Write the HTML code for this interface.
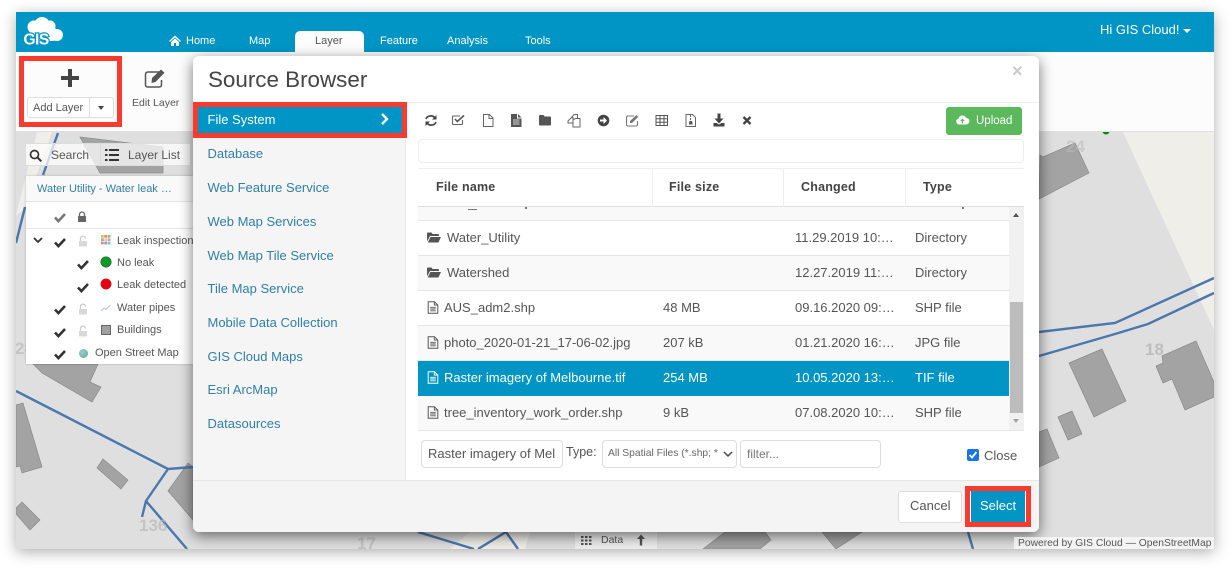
<!DOCTYPE html>
<html><head><meta charset="utf-8"><style>
html,body{margin:0;padding:0;background:#fff}
body{width:1230px;height:570px;overflow:hidden;position:relative;font-family:"Liberation Sans",sans-serif;color:#555}
#root{position:absolute;left:0;top:0;width:1230px;height:570px;filter:blur(.35px)}
.a{position:absolute}
.t{position:absolute;white-space:nowrap;line-height:16px;font-size:13px}
svg.i{position:absolute;overflow:visible}
#frame{position:absolute;left:16px;top:12px;width:1198px;height:537px;background:#e0dfe0;box-shadow:0 3px 14px rgba(0,0,0,.32);overflow:hidden}
.nav{color:#fff;font-size:11px;top:33px}
.side{color:#2f7fa6;left:207.500px;font-size:13px}
.th{font-weight:bold;color:#444;top:179px;font-size:12.500px;letter-spacing:.2px}
.row{position:absolute;left:418px;width:591px;height:34px;border-bottom:1px solid #e6e6e6}
.l{color:#555;font-size:11px}
.inp{position:absolute;background:#fff;border:1px solid #ddd;border-radius:4px;box-sizing:border-box}
.red{position:absolute;border:5px solid #f83b2e;box-sizing:border-box}
</style></head><body><div id="root">
<svg width="0" height="0" style="position:absolute"><defs>
<symbol id="chk" viewBox="0 0 12 12"><path d="M1 6.500l3.400 3.600L11 3" fill="none" stroke="currentColor" stroke-width="2.600"/></symbol>
<symbol id="unl" viewBox="0 0 12 12"><path d="M3.500 6V3.600a2.500 2.500 0 0 1 5 0" fill="none" stroke="#ccc" stroke-width="1.300"/><rect x="2" y="6" width="8" height="5.500" rx=".7" fill="#d8d8d8"/></symbol>
<symbol id="fol" viewBox="0 0 14 11"><path d="M0 1.500Q0 .5 1 .5h3.500l1 1.500H11q1 0 1 1v1H3L0 9.500zM3.400 5H14l-2.600 5.500H.8z" fill="#555"/></symbol>
<symbol id="doc" viewBox="0 0 11 13"><path d="M.7.7h6.200l3.400 3.400v8.200H.7z" fill="none" stroke="currentColor" stroke-width="1"/><path d="M6.800.7v3.400h3.400M2.700 6.300h5.600M2.700 8h5.600M2.700 9.800h5.600" fill="none" stroke="currentColor" stroke-width=".9"/></symbol>
</defs></svg>

<div id="frame"></div>
<svg class="i" style="left:16px;top:132px;clip-path:inset(0)" width="1198" height="417" viewBox="16 132 1198 417">
<rect x="16" y="132" width="1198" height="417" fill="#e0dfe0"/>
<polygon points="1123,132 1214,132 1214,330" fill="#f0eee8"/>
<polygon points="37,132 52,132 24,210 16,215" fill="#f0eee8"/>
<polygon points="450,549 470,532 530,532 525,549" fill="#f0eee8"/>
<g fill="#a3a3a3" stroke="#8b8b8b" stroke-width=".7">
<polygon points="1040,155 1043,157 1075,143 1089,173 1039,199"/>
<polygon points="1069,363 1102,349 1126,401 1094,417"/>
<polygon points="1058,417 1072,411 1082,434 1068,440"/>
<polygon points="1039,432 1047,429 1059,458 1039,467"/>
<polygon points="1162,356 1196,341 1214,382 1214,397 1185,410 1172,379 1163,383 1156,366 1163,363"/>
<polygon points="80,137 163,147 163,173 100,173"/>
<polygon points="33,364 98,364 90,382 101,387 92,402 42,373"/>
<polygon points="16,405 23,403 42,467 22,473 20,466 16,467"/>
<polygon points="103,459 128,480 121,489 97,468"/>
<polygon points="22,502 40,520 30,530 16,514 16,508"/>
<polygon points="168,491 188,463 193,467 193,520"/>
<polygon points="703,549 725,532 765,532 771,540 760,549"/>
<polygon points="822,532 862,532 836,549"/>
</g>
<g fill="none" stroke="#4a78ad" stroke-width="2.400">
<path d="M1039 332L1115 323L1214 278"/>
<path d="M1039 356L1115 334L1148 324L1214 293"/>
<path d="M16 391L168 469L193 467M168 469L146 501L187 549M146 501L142 517"/>
<path d="M58 133L43 175M25 207L16 243"/>
<path d="M968 532L973 549M418 532L474 549M478 549L506 532L518 549"/>
</g>
<circle cx="1106" cy="131" r="3.500" fill="#0a8a1d"/>
<g fill="#b9b9b9" font-family="'Liberation Sans',sans-serif" font-size="17" font-weight="bold">
<text x="1145" y="355" opacity=".85">18</text><text x="1066" y="152" opacity=".55">24</text><text x="139" y="531" opacity=".7">136</text><text x="15" y="354" opacity=".7">28</text><text x="357" y="549" opacity=".7">17</text>
</g>
</svg>

<!-- data tab (under dialog shadow) -->
<div class="a" style="left:575px;top:532px;width:82px;height:17px;background:#eee"></div>
<svg class="i" style="left:581px;top:535px" width="11" height="11" viewBox="0 0 11 11"><path d="M0 1h2.500v2H0zM4 1h2.500v2H4zM8 1h2.500v2H8zM0 4.500h2.500v2H0zM4 4.500h2.500v2H4zM8 4.500h2.500v2H8zM0 8h2.500v2H0zM4 8h2.500v2H4zM8 8h2.500v2H8z" fill="#555"/></svg>
<div class="t" style="left:601px;top:532px;font-size:10.500px">Data</div>
<svg class="i" style="left:636px;top:534px" width="10" height="12" viewBox="0 0 10 12"><path d="M5 .5L9 5H6.200v6.500H3.800V5H1z" fill="#555"/></svg>

<!-- header -->
<div class="a" style="left:16px;top:12px;width:1198px;height:40px;background:#0095c4"></div>
<svg class="i" style="left:23px;top:16px" width="42" height="32" viewBox="0 0 42 32">
<g fill="#fff"><circle cx="11" cy="11" r="6.500"/><circle cx="19" cy="9" r="8"/><circle cx="27" cy="10" r="5.500"/><circle cx="34" cy="19" r="6"/><rect x="7" y="11" width="26" height="14" rx="3"/></g>
<text x="0.500" y="28.500" font-family="'Liberation Sans',sans-serif" font-weight="bold" font-size="15.500" fill="#fff" stroke="#0095c4" stroke-width="2.400" paint-order="stroke" letter-spacing="-.5">GIS</text>
</svg>
<svg class="i" style="left:169px;top:35px" width="12" height="11" viewBox="0 0 12 11"><path d="M6 .5L0 6l.9.9L6 2.400l5.100 4.500.9-.9zM2 7v4h3V8h2v3h3V7L6 3.400z" fill="#fff"/></svg>
<div class="t nav" style="left:186px">Home</div>
<div class="t nav" style="left:249px">Map</div>
<div class="a" style="left:295px;top:31px;width:69px;height:21px;background:#fdfdfd;border-radius:5px 5px 0 0"></div>
<div class="t nav" style="left:315px;color:#555">Layer</div>
<div class="t nav" style="left:380px">Feature</div>
<div class="t nav" style="left:447px">Analysis</div>
<div class="t nav" style="left:525px">Tools</div>
<div class="t" style="left:1100px;top:22px;color:#fff;font-size:13px">Hi GIS Cloud!</div>
<div class="a" style="left:1183px;top:29px;border:4px solid transparent;border-top-color:#fff;border-bottom:0"></div>

<!-- toolbar -->
<div class="a" style="left:16px;top:52px;width:1198px;height:80px;background:#fcfcfc;border-bottom:1px solid #e0e0e0;box-sizing:border-box"></div>
<svg class="i" style="left:61px;top:69px" width="18" height="18" viewBox="0 0 18 18"><path d="M7 0h4v7h7v4h-7v7H7v-7H0V7h7z" fill="#444"/></svg>
<div class="a" style="left:27px;top:97px;width:87px;height:21px;border:1px solid #ddd;border-radius:3px;box-sizing:border-box;background:#fff"></div>
<div class="a" style="left:89px;top:97px;width:1px;height:21px;background:#ddd"></div>
<div class="t" style="left:33px;top:100px;font-size:11px">Add Layer</div>
<div class="a" style="left:98px;top:106px;border:3.500px solid transparent;border-top:4px solid #444;border-bottom:0"></div>
<svg class="i" style="left:144px;top:68px" width="24" height="21" viewBox="0 0 24 21"><path d="M15 4H4Q1.500 4 1.500 6.500v10Q1.500 19 4 19h11q2.500 0 2.500-2.500V12" fill="none" stroke="#555" stroke-width="1.500"/><path d="M8 10L17 1.500l3.500 3.300L11.500 14l-4 1z" fill="#555"/></svg>
<div class="t" style="left:132px;top:95px;font-size:10.500px">Edit Layer</div>

<!-- search -->
<div class="a" style="left:25px;top:143px;width:166px;height:23px;background:rgba(255,255,255,.72);border:1px solid #ddd;box-sizing:border-box"></div>
<div class="a" style="left:100px;top:143px;width:1px;height:23px;background:#ddd"></div>
<svg class="i" style="left:29px;top:149px" width="13" height="13" viewBox="0 0 13 13"><circle cx="5.500" cy="5.500" r="4" fill="none" stroke="#333" stroke-width="1.700"/><path d="M8.500 8.500L12.300 12.300" stroke="#333" stroke-width="2"/></svg>
<div class="t" style="left:51px;top:147px;font-size:12px">Search</div>
<svg class="i" style="left:105px;top:149px" width="14" height="12" viewBox="0 0 14 12"><path d="M0 1h2.500M4 1h10M0 6h2.500M4 6h10M0 11h2.500M4 11h10" stroke="#333" stroke-width="2"/></svg>
<div class="t" style="left:128px;top:147px;font-size:12px">Layer List</div>

<!-- layer panel -->
<div class="a" style="left:26px;top:176px;width:167px;height:188px;background:#fff;box-shadow:0 0 2px rgba(0,0,0,.25)"></div>
<div class="a" style="left:26px;top:176px;width:167px;height:26px;background:#f9f9f9;border-bottom:1px solid #e5e5e5;box-sizing:border-box"></div>
<div class="t" style="left:37px;top:181px;font-size:11px;color:#357fa5">Water Utility - Water leak …</div>
<div class="a" style="left:26px;top:228px;width:167px;height:1px;background:#e5e5e5"></div>
<svg class="i" style="left:54px;top:211px;color:#777" width="12" height="12"><use href="#chk"/></svg>
<svg class="i" style="left:77px;top:211px" width="10" height="12" viewBox="0 0 10 12"><path d="M2.500 5V3.500a2.500 2.500 0 0 1 5 0V5" fill="none" stroke="#666" stroke-width="1.300"/><rect x="1" y="5" width="8" height="6" rx=".6" fill="#666"/></svg>
<svg class="i" style="left:33px;top:237px" width="10" height="7" viewBox="0 0 10 7"><path d="M1 1l4 4 4-4" fill="none" stroke="#333" stroke-width="1.800"/></svg>
<svg class="i" style="left:54px;top:236px;color:#333" width="12" height="12"><use href="#chk"/></svg>
<svg class="i" style="left:77px;top:258px;color:#333" width="12" height="12"><use href="#chk"/></svg>
<svg class="i" style="left:77px;top:281px;color:#333" width="12" height="12"><use href="#chk"/></svg>
<svg class="i" style="left:54px;top:303px;color:#333" width="12" height="12"><use href="#chk"/></svg>
<svg class="i" style="left:54px;top:326px;color:#333" width="12" height="12"><use href="#chk"/></svg>
<svg class="i" style="left:54px;top:348px;color:#333" width="12" height="12"><use href="#chk"/></svg>
<svg class="i" style="left:77px;top:235px" width="12" height="12"><use href="#unl"/></svg>
<svg class="i" style="left:77px;top:303px" width="12" height="12"><use href="#unl"/></svg>
<svg class="i" style="left:77px;top:325px" width="12" height="12"><use href="#unl"/></svg>
<svg class="i" style="left:101px;top:235px" width="10" height="10" viewBox="0 0 9 9"><g><rect width="2.500" height="2.500" fill="#f2b84b"/><rect x="3" width="2.500" height="2.500" fill="#ef7f7f"/><rect x="6" width="2.500" height="2.500" fill="#7fc97f"/><rect y="3" width="2.500" height="2.500" fill="#7fb2e5"/><rect x="3" y="3" width="2.500" height="2.500" fill="#f2d04b"/><rect x="6" y="3" width="2.500" height="2.500" fill="#e58fc8"/><rect y="6" width="2.500" height="2.500" fill="#e58f6f"/><rect x="3" y="6" width="2.500" height="2.500" fill="#9f8fe5"/><rect x="6" y="6" width="2.500" height="2.500" fill="#6fd0c8"/></g></svg>
<div class="a" style="left:101px;top:257px;width:10px;height:10px;border-radius:50%;background:#0a9b24;box-shadow:0 0 0 .5px #444"></div>
<div class="a" style="left:101px;top:279px;width:10px;height:10px;border-radius:50%;background:#e8000f;box-shadow:0 0 0 .5px #a33"></div>
<svg class="i" style="left:101px;top:304px" width="10" height="8" viewBox="0 0 10 8"><path d="M0 7l3-3 2 1.500L9.500 1" fill="none" stroke="#a9c4e4" stroke-width="1"/></svg>
<div class="a" style="left:101px;top:325px;width:10px;height:10px;background:#a0a0a0;border:1px solid #666;box-sizing:border-box"></div>
<div class="a" style="left:79px;top:349px;width:9px;height:9px;border-radius:50%;background:radial-gradient(circle at 35% 35%,#8fd0e0,#6aa86a)"></div>
<div class="a" style="left:26px;top:230px;width:167px;height:134px;overflow:hidden">
<div class="t l" style="left:91px;top:3px">Leak inspection</div>
<div class="t l" style="left:91px;top:25px">No leak</div>
<div class="t l" style="left:91px;top:47px">Leak detected</div>
<div class="t l" style="left:91px;top:70px">Water pipes</div>
<div class="t l" style="left:91px;top:92px">Buildings</div>
<div class="t l" style="left:69px;top:115px">Open Street Map</div>
</div>

<!-- dialog -->
<div class="a" style="left:193px;top:56px;width:846px;height:476px;background:#fff;border-radius:6px;box-shadow:0 4px 14px rgba(0,0,0,.55);overflow:hidden">
<div class="a" style="left:0;top:46px;width:846px;height:1px;background:#eee"></div>
<div class="a" style="left:0;top:47px;width:212px;height:377px;background:#f5f5f5;border-right:1px solid #e8e8e8"></div>
<div class="a" style="left:0;top:424px;width:846px;height:52px;background:#f4f4f4;border-top:1px solid #e6e6e6;box-sizing:border-box"></div>
</div>
<div class="t" style="left:208px;top:66px;font-size:22.400px;line-height:28px;color:#444">Source Browser</div>
<div class="t" style="left:1012px;top:63px;font-size:18px;font-weight:bold;color:#c9c9c9">×</div>

<div class="a" style="left:198px;top:107px;width:204px;height:26px;background:#0095c4"></div>
<div class="t" style="left:207.500px;top:112px;color:#fff">File System</div>
<svg class="i" style="left:380px;top:113px" width="9" height="12" viewBox="0 0 9 12"><path d="M2 1l5 5-5 5" fill="none" stroke="#fff" stroke-width="2.400"/></svg>
<div class="t side" style="top:146px">Database</div>
<div class="t side" style="top:180px">Web Feature Service</div>
<div class="t side" style="top:214px">Web Map Services</div>
<div class="t side" style="top:248px">Web Map Tile Service</div>
<div class="t side" style="top:281px">Tile Map Service</div>
<div class="t side" style="top:315px">Mobile Data Collection</div>
<div class="t side" style="top:349px">GIS Cloud Maps</div>
<div class="t side" style="top:382px">Esri ArcMap</div>
<div class="t side" style="top:416px">Datasources</div>

<!-- file toolbar icons -->
<svg class="i" style="left:424px;top:113px" width="340" height="15" viewBox="424 113 340 15">
<g fill="none" stroke="#444" stroke-width="1.700"><path d="M426 119a5 4.500 0 0 1 9-1M436 122a5 4.500 0 0 1-9 1"/></g><path d="M436.500 115v4.500H432zM425.500 126v-4.500H430z" fill="#444"/>
<path d="M460 116h-6.500q-1 0-1 1v6.500q0 1 1 1h8q1 0 1-1V120" fill="none" stroke="#666" stroke-width="1.100"/><path d="M455 119l2.300 2.500L464 115.500" fill="none" stroke="#555" stroke-width="1.600"/>
<path d="M483.500 114.500h6l3.500 3.500v8.500h-9.500zM489 114.500v4h4" fill="none" stroke="#666" stroke-width="1"/>
<path d="M511 114h6v4.500h4.500V127H511zM518 114l3.500 3.500H518z" fill="#555"/><path d="M513 120h6.500M513 122h6.500M513 124h6.500" stroke="#fff" stroke-width=".8"/>
<path d="M539 116q0-1 1-1h3.500l1.200 1.500h5.300q1 0 1 1v7q0 1-1 1h-10q-1 0-1-1z" fill="#555"/>
<path d="M571.500 117.500l2.500-3h3.500v4M568 121l3.500-3.500h1.500v5.500h-5zM573 119.500l3-1h4v8.500h-7z" fill="none" stroke="#666" stroke-width="1"/>
<circle cx="603.500" cy="120.500" r="5.800" fill="#444"/><path d="M600 119.500h3.500V117l3.500 3.500-3.500 3.500v-2.500H600z" fill="#fff"/>
<path d="M634 116h-6q-1.500 0-1.500 1.500v7q0 1.500 1.500 1.500h8q1.500 0 1.500-1.500V121" fill="none" stroke="#777" stroke-width="1.100"/><path d="M630 121l6.500-6 1.800 1.800-6.300 6.200h-2z" fill="#777"/>
<path d="M656 115.500h11.500v10H656zM656 118.800h11.500M656 122.200h11.500M660 115.500v10M664 115.500v10" fill="none" stroke="#555" stroke-width="1"/>
<path d="M686 114.500h6.500l3 3v9h-9.500zM690.500 115v2M690.500 118v2" fill="none" stroke="#666" stroke-width="1"/><path d="M689.500 121h2.500l.7 3.500h-3.900z" fill="#555"/>
<path d="M717.500 113.500h3v5h3l-4.500 5-4.500-5h3zM713.500 123h3l2.500 1.500 2.500-1.500h3v3.500h-11z" fill="#444"/>
<path d="M743.500 117l7 7M750.500 117l-7 7" stroke="#444" stroke-width="2.400"/>
</svg>

<div class="a" style="left:946px;top:107px;width:76px;height:28px;background:#5cb85c;border-radius:3px"></div>
<svg class="i" style="left:956px;top:115px" width="13" height="10" viewBox="0 0 13 10"><path d="M3 9.500a3 3 0 0 1-.5-5.900 4 4 0 0 1 7.500-.9 3.400 3.400 0 0 1 0 6.800z" fill="#fff"/><path d="M6.500 3.500L4.300 6h1.500v2.500h1.400V6h1.500z" fill="#5cb85c"/></svg>
<div class="t" style="left:976px;top:113px;font-size:11.500px;color:#fff">Upload</div>
<div class="inp" style="left:418px;top:139px;width:606px;height:24px;border-color:#eee"></div>

<!-- table -->
<div class="a" style="left:418px;top:168px;width:606px;height:39px;border-top:1px solid #eee;border-bottom:1px solid #ddd;box-sizing:border-box;background:#fff"></div>
<div class="a" style="left:652px;top:168px;width:1px;height:39px;background:#eee"></div>
<div class="a" style="left:783px;top:168px;width:1px;height:39px;background:#eee"></div>
<div class="a" style="left:905px;top:168px;width:1px;height:39px;background:#eee"></div>
<div class="t th" style="left:436px">File name</div>
<div class="t th" style="left:669px">File size</div>
<div class="t th" style="left:801px">Changed</div>
<div class="t th" style="left:923px">Type</div>

<div class="row" style="top:207px;height:13px;background:#f9f9f9"></div>
<div class="row" style="top:221px;background:#fff"></div>
<div class="row" style="top:256px;background:#f9f9f9"></div>
<div class="row" style="top:291px;background:#fff"></div>
<div class="row" style="top:326px;background:#f9f9f9"></div>
<div class="row" style="top:361px;background:#0095c4;border:0;height:35px"></div>
<div class="row" style="top:396px;background:#f9f9f9"></div>
<div class="a" style="left:468px;top:209px;width:9px;height:1px;background:#777"></div>
<div class="a" style="left:525px;top:207px;width:2px;height:2px;background:#777"></div>
<div class="a" style="left:962px;top:207px;width:2px;height:2px;background:#777"></div>

<svg class="i" style="left:427px;top:232px" width="14" height="11"><use href="#fol"/></svg>
<svg class="i" style="left:427px;top:267px" width="14" height="11"><use href="#fol"/></svg>
<svg class="i" style="left:427px;top:301px;color:#555" width="12" height="13"><use href="#doc"/></svg>
<svg class="i" style="left:427px;top:336px;color:#555" width="12" height="13"><use href="#doc"/></svg>
<svg class="i" style="left:427px;top:371px;color:#fff" width="12" height="13"><use href="#doc"/></svg>
<svg class="i" style="left:427px;top:406px;color:#555" width="12" height="13"><use href="#doc"/></svg>

<div class="t" style="left:447px;top:230px">Water_Utility</div>
<div class="t" style="left:447px;top:265px">Watershed</div>
<div class="t" style="left:444px;top:300px">AUS_adm2.shp</div>
<div class="t" style="left:444px;top:335px">photo_2020-01-21_17-06-02.jpg</div>
<div class="t" style="left:444px;top:370px;color:#fff">Raster imagery of Melbourne.tif</div>
<div class="t" style="left:444px;top:405px">tree_inventory_work_order.shp</div>
<div class="t" style="left:663px;top:300px">48 MB</div>
<div class="t" style="left:663px;top:335px">207 kB</div>
<div class="t" style="left:663px;top:370px;color:#fff">254 MB</div>
<div class="t" style="left:663px;top:405px">9 kB</div>
<div class="t" style="left:795px;top:230px">11.29.2019 10:…</div>
<div class="t" style="left:795px;top:265px">12.27.2019 11:…</div>
<div class="t" style="left:795px;top:300px">09.16.2020 09:…</div>
<div class="t" style="left:795px;top:335px">01.21.2020 16:…</div>
<div class="t" style="left:795px;top:370px;color:#fff">10.05.2020 13:…</div>
<div class="t" style="left:795px;top:405px">07.08.2020 10:…</div>
<div class="t" style="left:915px;top:230px">Directory</div>
<div class="t" style="left:915px;top:265px">Directory</div>
<div class="t" style="left:915px;top:300px">SHP file</div>
<div class="t" style="left:915px;top:335px">JPG file</div>
<div class="t" style="left:915px;top:370px;color:#fff">TIF file</div>
<div class="t" style="left:915px;top:405px">SHP file</div>

<!-- scrollbar -->
<div class="a" style="left:1009px;top:207px;width:15px;height:223px;background:#f1f1f1"></div>
<div class="a" style="left:1010px;top:302px;width:13px;height:111px;background:#bcbcbc"></div>
<div class="a" style="left:1013px;top:213px;border:3.500px solid transparent;border-bottom:4px solid #505050;border-top:0"></div>
<div class="a" style="left:1013px;top:419px;border:3.500px solid transparent;border-top:4px solid #a3a3a3;border-bottom:0"></div>
<div class="a" style="left:418px;top:430px;width:606px;height:1px;background:#e6e6e6"></div>

<!-- bottom form -->
<div class="inp" style="left:421px;top:440px;width:142px;height:28px"></div>
<div class="t" style="left:428px;top:446px;width:130px;overflow:hidden">Raster imagery of Mel</div>
<div class="t" style="left:566px;top:444px;font-size:12.500px">Type:</div>
<div class="inp" style="left:602px;top:440px;width:135px;height:28px"></div>
<div class="t" style="left:608px;top:446px;width:111px;overflow:hidden;font-size:10.300px;color:#666">All Spatial Files (*.shp; *</div>
<svg class="i" style="left:723px;top:451px" width="10" height="7" viewBox="0 0 10 7"><path d="M1 1l4 4 4-4" fill="none" stroke="#444" stroke-width="1.500"/></svg>
<div class="inp" style="left:740px;top:440px;width:141px;height:28px"></div>
<div class="t" style="left:747px;top:446px;font-size:12px;color:#777">filter...</div>
<div class="a" style="left:967px;top:449px;width:12px;height:12px;background:#1a73e8;border-radius:2px"></div>
<svg class="i" style="left:968px;top:450px" width="10" height="10" viewBox="0 0 10 10"><path d="M1.500 5l2.500 2.500L8.500 2" fill="none" stroke="#fff" stroke-width="1.800"/></svg>
<div class="t" style="left:984px;top:448px">Close</div>

<div class="a" style="left:898px;top:491px;width:64px;height:32px;background:#fff;border:1px solid #ddd;border-radius:3px;box-sizing:border-box"></div>
<div class="t" style="left:910px;top:498px">Cancel</div>
<div class="a" style="left:971px;top:491px;width:54px;height:32px;background:#0095c4"></div>
<div class="t" style="left:980px;top:498px;color:#fff">Select</div>

<!-- attribution -->
<div class="a" style="left:1014px;top:537px;width:200px;height:12px;background:rgba(255,255,255,.65)"></div>
<div class="t" style="left:1018px;top:536px;font-size:10.300px;line-height:16px;color:#555">Powered by GIS Cloud — OpenStreetMap</div>

<!-- red highlights -->
<div class="red" style="left:19px;top:56px;width:103px;height:71px"></div>
<div class="red" style="left:193px;top:102px;width:214px;height:36px"></div>
<div class="red" style="left:965px;top:486px;width:66px;height:41px"></div>
</div></body></html>
